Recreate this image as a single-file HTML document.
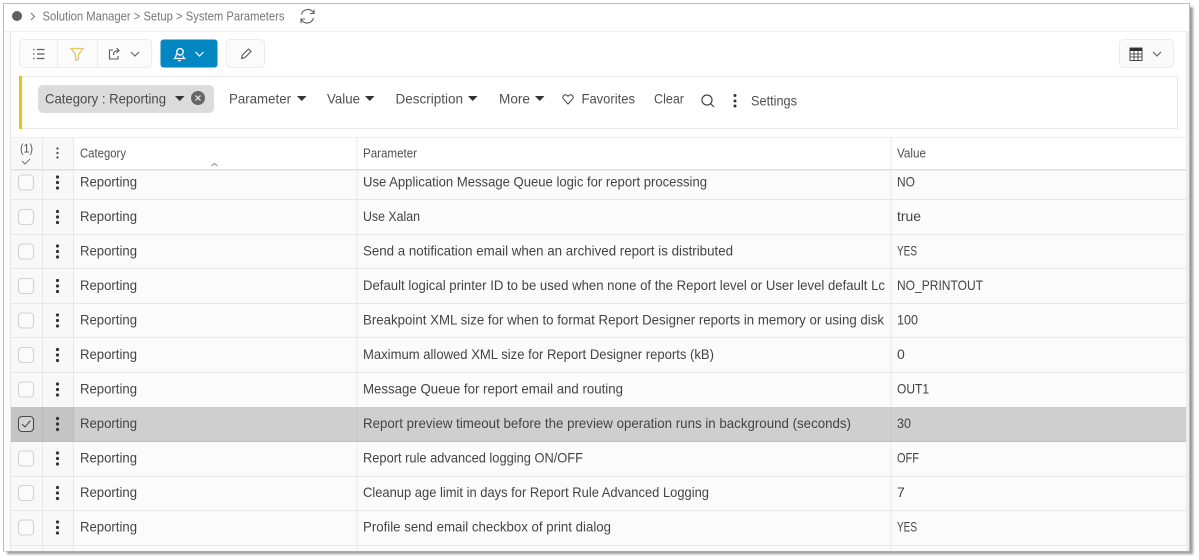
<!DOCTYPE html>
<html><head><meta charset="utf-8"><title>System Parameters</title>
<style>
html,body{margin:0;padding:0;background:#fff;width:1199px;height:560px;overflow:hidden}
svg{display:block}
text{font-family:"Liberation Sans",sans-serif;font-size:14px;fill:#444}
.h{font-size:12.5px;fill:#505050}
.b{font-size:12.5px;fill:#777}
.f{font-size:14px;fill:#505050}
.i{fill:none;stroke:#5c5c5c;stroke-width:1.1}
</style></head><body>
<svg width="1199" height="560" viewBox="0 0 1199 560" xmlns="http://www.w3.org/2000/svg">
<defs>
<filter id="s" x="-2%" y="-2%" width="104%" height="104%"><feGaussianBlur stdDeviation="1.2"/></filter>
</defs>
<rect x="7" y="7" width="1186" height="547" fill="#9a9a9a" filter="url(#s)"/>
<rect x="3.5" y="3.5" width="1186" height="547.5" fill="#fff" stroke="#bdbdbd"/>
<rect x="4" y="31" width="7" height="520" fill="#fbfbfb"/>
<rect x="1186" y="31" width="3" height="520" fill="#eee"/>
<rect x="4" y="31" width="1185" height="1" fill="#efefef"/>
<rect x="10" y="32" width="1" height="519" fill="#e8e8e8"/>

<!-- breadcrumb -->
<circle cx="17" cy="16" r="5" fill="#5f5f5f"/>
<path d="M31 13l3.500 3.500-3.500 3.500" class="i" style="stroke:#777"/>
<text class="b" x="42.500" y="20.500" textLength="242" lengthAdjust="spacingAndGlyphs">Solution Manager &gt; Setup &gt; System Parameters</text>
<path d="M301.500 14.500a6.500 6.500 0 0 1 11-3l1.500 1.500M313.500 18a6.500 6.500 0 0 1-11 3l-1.500-1.500M314 9.500v4h-4M301 23v-4h4" class="i"/>

<!-- toolbar -->
<rect x="19.500" y="39.500" width="132" height="28" rx="4" fill="#fbfbfb" stroke="#ececec"/>
<path d="M57.500 40v27M97.500 40v27" stroke="#ececec"/>
<path d="M33 49.500h1.500M33 54h1.500M33 58.500h1.500M37 49.500h7.500M37 54h7.500M37 58.500h7.500" class="i" style="stroke-width:1.300"/>
<path d="M71 48.500h12l-4.500 6v4.500l-3 1.500v-6z" fill="none" stroke="#e0c668" stroke-width="1.300"/>
<path d="M113 50h-3.500v9h8.500v-3M113.500 55c0-3 2-4.500 5-4.500M116.500 48l2.500 2.500-2.500 2.500" class="i"/>
<path d="M131 52l4 4 4-4" class="i"/>
<rect x="160.500" y="39.500" width="57" height="28" rx="3" fill="#0287c3"/>
<path d="M176.500 53.500c-.2 2-.8 3.800-2 5h10c-.9-.8-1.300-2-1.500-3M178 60.700h3" fill="none" stroke="#fff" stroke-width="1.200"/>
<circle cx="180" cy="51.800" r="3.200" fill="none" stroke="#fff" stroke-width="1.400"/>
<path d="M195.500 52l4 4 4-4" fill="none" stroke="#fff" stroke-width="1.200"/>
<rect x="226.500" y="39.500" width="38" height="28" rx="4" fill="#fbfbfb" stroke="#ececec"/>
<path d="M241.500 58.500l1-3.500 6-6 2.500 2.500-6 6z" fill="#fff" stroke="#555" stroke-width="1.100"/>
<rect x="1119.500" y="39.500" width="54" height="28" rx="4" fill="#fafafa" stroke="#ececec"/>
<rect x="1130" y="48" width="12" height="12.500" fill="#fff" stroke="#444"/>
<rect x="1130" y="48" width="12" height="3" fill="#333"/>
<path d="M1134 51v9M1138 51v9M1130 54h12M1130 57h12" stroke="#555"/>
<path d="M1153 52l4 4 4-4" class="i"/>

<!-- filter panel -->
<rect x="19.500" y="76.500" width="1158" height="52" fill="#fff" stroke="#e8e8e8"/>
<rect x="19" y="76" width="3" height="53" fill="#dcc81c"/>
<rect x="38" y="85" width="176" height="28" rx="5" fill="#dcdcdc"/>
<text class="f" x="45" y="103.500" textLength="121" lengthAdjust="spacingAndGlyphs" style="fill:#4a4a4a">Category : Reporting</text>
<path d="M175 96h9.500l-4.750 5z" fill="#333"/>
<circle cx="198" cy="98" r="7" fill="#666"/>
<path d="M195.500 95.500l5 5M200.500 95.500l-5 5" stroke="#dcdcdc" stroke-width="1.300"/>
<text class="f" x="229" y="103.500" textLength="62" lengthAdjust="spacingAndGlyphs">Parameter</text>
<path d="M297 96h9.500l-4.750 5z" fill="#333"/>
<text class="f" x="327" y="103.500" textLength="33" lengthAdjust="spacingAndGlyphs">Value</text>
<path d="M365 96h9.500l-4.750 5z" fill="#333"/>
<text class="f" x="395.500" y="103.500" textLength="67.500" lengthAdjust="spacingAndGlyphs">Description</text>
<path d="M468 96h9.500l-4.750 5z" fill="#333"/>
<text class="f" x="499" y="103.500" textLength="31" lengthAdjust="spacingAndGlyphs">More</text>
<path d="M535 96h9.500l-4.750 5z" fill="#333"/>
<path d="M568 104l-4.500-5c-1.700-2.300 .5-5 2.800-4l1.700 1.200 1.700-1.200c2.300-1 4.500 1.700 2.800 4z" fill="none" stroke="#555" stroke-width="1.100"/>
<text class="f" x="581.500" y="103.500" textLength="53.500" lengthAdjust="spacingAndGlyphs">Favorites</text>
<text class="f" x="654" y="103.500" textLength="30" lengthAdjust="spacingAndGlyphs">Clear</text>
<circle cx="707" cy="100" r="5" fill="none" stroke="#444" stroke-width="1.200"/>
<path d="M710.500 103.500l3.500 3.500" stroke="#444" stroke-width="1.200"/>
<circle cx="735" cy="95.500" r="1.500" fill="#333"/><circle cx="735" cy="101" r="1.500" fill="#333"/><circle cx="735" cy="106" r="1.500" fill="#333"/>
<text class="f" x="751" y="105.500" textLength="46" lengthAdjust="spacingAndGlyphs">Settings</text>

<!-- table -->
<rect x="11" y="137" width="1175" height="1.500" fill="#eee"/>
<rect x="11" y="138" width="1175" height="32" fill="#fff"/>
<rect x="11" y="170" width="1175" height="381" fill="#fbfbfb"/>
<rect x="11" y="138" width="62" height="413" fill="#f8f8f8"/>
<rect x="11" y="169" width="1175" height="1.500" fill="#dedede"/>

<rect x="11" y="407" width="1175" height="35" fill="#cfcfcf"/>
<rect x="11" y="407" width="62" height="35" fill="#c4c4c4"/>

<g fill="#e8e8e8">
<rect x="11" y="199" width="1175" height="1"/><rect x="11" y="234" width="1175" height="1"/>
<rect x="11" y="268" width="1175" height="1"/><rect x="11" y="303" width="1175" height="1"/>
<rect x="11" y="337" width="1175" height="1"/><rect x="11" y="372" width="1175" height="1"/>
<rect x="11" y="476" width="1175" height="1"/><rect x="11" y="510" width="1175" height="1"/>
<rect x="11" y="545" width="1175" height="1"/>
<rect x="42" y="138" width="1" height="269"/><rect x="73" y="138" width="1" height="269"/><rect x="356.500" y="138" width="1" height="269"/><rect x="890.500" y="138" width="1" height="269"/>
<rect x="42" y="442" width="1" height="109"/><rect x="73" y="442" width="1" height="109"/><rect x="356.500" y="442" width="1" height="109"/><rect x="890.500" y="442" width="1" height="109"/>
</g>
<rect x="11" y="441" width="1175" height="1" fill="#bdbdbd"/>
<rect x="42" y="407" width="1" height="35" fill="#b8b8b8"/><rect x="73" y="407" width="1" height="35" fill="#bbb"/><rect x="356.500" y="407" width="1" height="35" fill="#c4c4c4"/><rect x="890.500" y="407" width="1" height="35" fill="#c4c4c4"/>

<!-- header -->
<text class="h" x="20" y="152.500" textLength="13" lengthAdjust="spacingAndGlyphs" style="font-size:11.500px">(1)</text>
<path d="M22 161l3 3 5-5" fill="none" stroke="#777"/>
<circle cx="57.500" cy="148.500" r="1.100" fill="#444"/><circle cx="57.500" cy="153" r="1.100" fill="#444"/><circle cx="57.500" cy="157.500" r="1.100" fill="#444"/>
<text class="h" x="80" y="157.500" textLength="46" lengthAdjust="spacingAndGlyphs">Category</text>
<path d="M211.500 166l3-2.500 3 2.500" fill="none" stroke="#888"/>
<text class="h" x="363" y="157.500" textLength="54" lengthAdjust="spacingAndGlyphs">Parameter</text>
<text class="h" x="897" y="157.500" textLength="29" lengthAdjust="spacingAndGlyphs">Value</text>

<!-- checkboxes -->
<g fill="#fbfbfb" stroke="#d2d2d2" stroke-width="1.100">
<rect x="18.500" y="175" width="15" height="15" rx="3.500"/>
<rect x="18.500" y="209.500" width="15" height="15" rx="3.500"/>
<rect x="18.500" y="244" width="15" height="15" rx="3.500"/>
<rect x="18.500" y="278.500" width="15" height="15" rx="3.500"/>
<rect x="18.500" y="313" width="15" height="15" rx="3.500"/>
<rect x="18.500" y="347.500" width="15" height="15" rx="3.500"/>
<rect x="18.500" y="382" width="15" height="15" rx="3.500"/>
<rect x="18.500" y="451" width="15" height="15" rx="3.500"/>
<rect x="18.500" y="485.500" width="15" height="15" rx="3.500"/>
<rect x="18.500" y="520" width="15" height="15" rx="3.500"/>
</g>
<rect x="18.500" y="416.500" width="15" height="15" rx="3.500" fill="#d4d4d4" stroke="#4a4a4a" stroke-width="1.100"/>
<path d="M22 424l3 3 5.500-6.500" fill="none" stroke="#444"/>

<!-- row dots -->
<g fill="#333">
<circle cx="57.500" cy="177" r="1.600"/><circle cx="57.500" cy="182.500" r="1.600"/><circle cx="57.500" cy="188" r="1.600"/>
<circle cx="57.500" cy="211.500" r="1.600"/><circle cx="57.500" cy="217" r="1.600"/><circle cx="57.500" cy="222.500" r="1.600"/>
<circle cx="57.500" cy="246" r="1.600"/><circle cx="57.500" cy="251.500" r="1.600"/><circle cx="57.500" cy="257" r="1.600"/>
<circle cx="57.500" cy="280.500" r="1.600"/><circle cx="57.500" cy="286" r="1.600"/><circle cx="57.500" cy="291.500" r="1.600"/>
<circle cx="57.500" cy="315" r="1.600"/><circle cx="57.500" cy="320.500" r="1.600"/><circle cx="57.500" cy="326" r="1.600"/>
<circle cx="57.500" cy="349.500" r="1.600"/><circle cx="57.500" cy="355" r="1.600"/><circle cx="57.500" cy="360.500" r="1.600"/>
<circle cx="57.500" cy="384" r="1.600"/><circle cx="57.500" cy="389.500" r="1.600"/><circle cx="57.500" cy="395" r="1.600"/>
<circle cx="57.500" cy="418.500" r="1.600"/><circle cx="57.500" cy="424" r="1.600"/><circle cx="57.500" cy="429.500" r="1.600"/>
<circle cx="57.500" cy="453" r="1.600"/><circle cx="57.500" cy="458.500" r="1.600"/><circle cx="57.500" cy="464" r="1.600"/>
<circle cx="57.500" cy="487.500" r="1.600"/><circle cx="57.500" cy="493" r="1.600"/><circle cx="57.500" cy="498.500" r="1.600"/>
<circle cx="57.500" cy="522" r="1.600"/><circle cx="57.500" cy="527.500" r="1.600"/><circle cx="57.500" cy="533" r="1.600"/>
</g>

<!-- rows -->
<text x="80" y="186.500" textLength="57" lengthAdjust="spacingAndGlyphs">Reporting</text>
<text x="363" y="186.500" textLength="344" lengthAdjust="spacingAndGlyphs">Use Application Message Queue logic for report processing</text>
<text x="897" y="186.500" textLength="18" lengthAdjust="spacingAndGlyphs">NO</text>

<text x="80" y="221" textLength="57" lengthAdjust="spacingAndGlyphs">Reporting</text>
<text x="363" y="221" textLength="57" lengthAdjust="spacingAndGlyphs">Use Xalan</text>
<text x="897" y="221" textLength="24" lengthAdjust="spacingAndGlyphs">true</text>

<text x="80" y="255.500" textLength="57" lengthAdjust="spacingAndGlyphs">Reporting</text>
<text x="363" y="255.500" textLength="370" lengthAdjust="spacingAndGlyphs">Send a notification email when an archived report is distributed</text>
<text x="897" y="255.500" textLength="20" lengthAdjust="spacingAndGlyphs">YES</text>

<text x="80" y="290" textLength="57" lengthAdjust="spacingAndGlyphs">Reporting</text>
<text x="363" y="290" textLength="522" lengthAdjust="spacingAndGlyphs">Default logical printer ID to be used when none of the Report level or User level default Lc</text>
<text x="897" y="290" textLength="86" lengthAdjust="spacingAndGlyphs">NO_PRINTOUT</text>

<text x="80" y="324.500" textLength="57" lengthAdjust="spacingAndGlyphs">Reporting</text>
<text x="363" y="324.500" textLength="521" lengthAdjust="spacingAndGlyphs">Breakpoint XML size for when to format Report Designer reports in memory or using disk</text>
<text x="897" y="324.500" textLength="21" lengthAdjust="spacingAndGlyphs">100</text>

<text x="80" y="359" textLength="57" lengthAdjust="spacingAndGlyphs">Reporting</text>
<text x="363" y="359" textLength="351" lengthAdjust="spacingAndGlyphs">Maximum allowed XML size for Report Designer reports (kB)</text>
<text x="897" y="359">0</text>

<text x="80" y="393.500" textLength="57" lengthAdjust="spacingAndGlyphs">Reporting</text>
<text x="363" y="393.500" textLength="260" lengthAdjust="spacingAndGlyphs">Message Queue for report email and routing</text>
<text x="897" y="393.500" textLength="32" lengthAdjust="spacingAndGlyphs">OUT1</text>

<text x="80" y="428" textLength="57" lengthAdjust="spacingAndGlyphs">Reporting</text>
<text x="363" y="428" textLength="488" lengthAdjust="spacingAndGlyphs">Report preview timeout before the preview operation runs in background (seconds)</text>
<text x="897" y="428" textLength="14" lengthAdjust="spacingAndGlyphs">30</text>

<text x="80" y="462.500" textLength="57" lengthAdjust="spacingAndGlyphs">Reporting</text>
<text x="363" y="462.500" textLength="220" lengthAdjust="spacingAndGlyphs">Report rule advanced logging ON/OFF</text>
<text x="897" y="462.500" textLength="22" lengthAdjust="spacingAndGlyphs">OFF</text>

<text x="80" y="497" textLength="57" lengthAdjust="spacingAndGlyphs">Reporting</text>
<text x="363" y="497" textLength="346" lengthAdjust="spacingAndGlyphs">Cleanup age limit in days for Report Rule Advanced Logging</text>
<text x="897" y="497">7</text>

<text x="80" y="531.500" textLength="57" lengthAdjust="spacingAndGlyphs">Reporting</text>
<text x="363" y="531.500" textLength="248" lengthAdjust="spacingAndGlyphs">Profile send email checkbox of print dialog</text>
<text x="897" y="531.500" textLength="20" lengthAdjust="spacingAndGlyphs">YES</text>
</svg>
</body></html>
